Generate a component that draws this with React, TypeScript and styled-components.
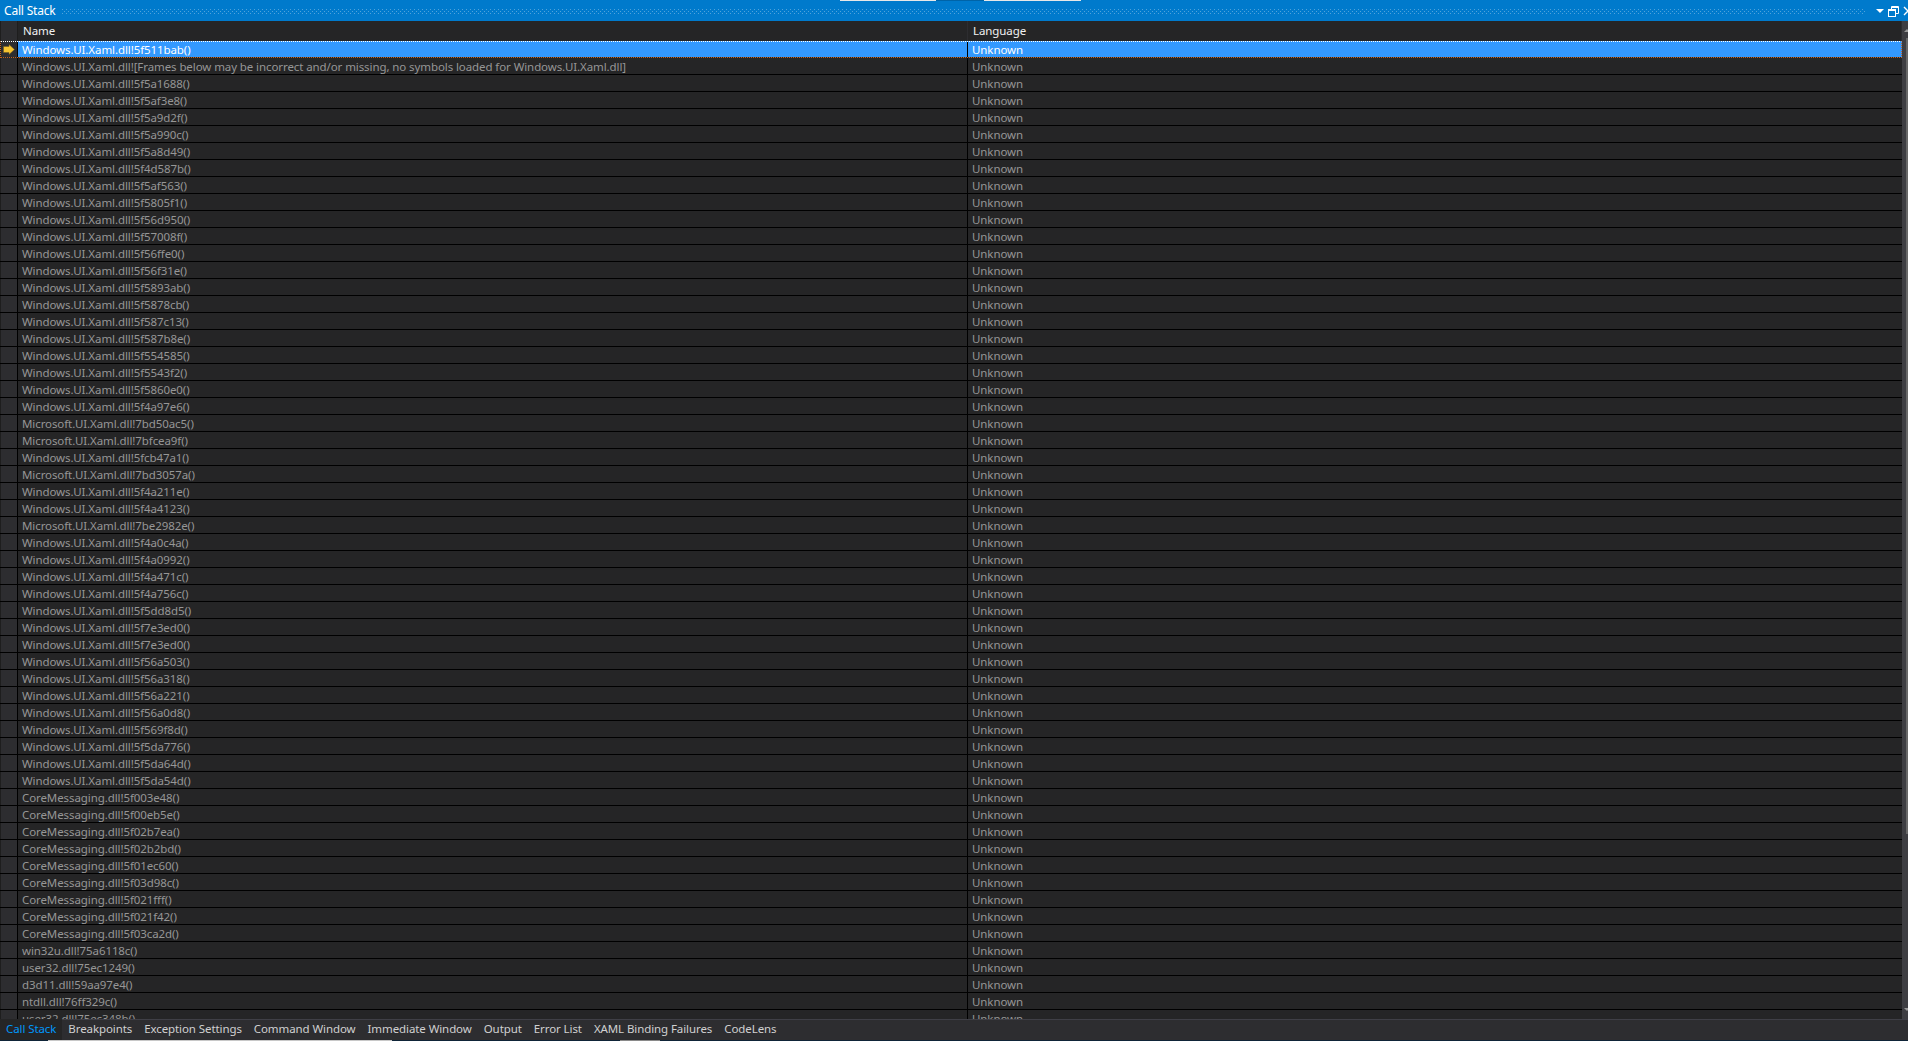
import styled, { createGlobalStyle } from "styled-components";

const GlobalStyle = createGlobalStyle`
  html, body {
    margin: 0;
    padding: 0;
    background: #2d2d30;
  }
  #root {
    height: 1041px;
  }
`;

const FONT = `"Noto Sans", "Open Sans", sans-serif`;

const Window = styled.div`
  display: flex;
  flex-direction: column;
  width: 1908px;
  height: 1041px;
  overflow: hidden;
  font-family: ${FONT};
  font-size: 11.5px;
  letter-spacing: -0.09px;
`;

const CaptureStrip = styled.div`
  display: flex;
  height: 1px;
  flex: none;
`;

const StripPiece = styled.div<{ $w: number; $color: string }>`
  width: ${(p) => p.$w}px;
  flex: ${(p) => (p.$w ? "none" : 1)};
  background: ${(p) => p.$color};
`;

const TitleBar = styled.div`
  display: flex;
  align-items: center;
  height: 20px;
  flex: none;
  background: #007acc;
  color: #fff;
  padding-left: 4px;
`;

const TitleText = styled.span`
  line-height: 20px;
  font-size: 12px;
  letter-spacing: -0.2px;
`;

const Grip = styled.div`
  flex: 1;
  height: 5px;
  margin: 1px 11px 0 7px;
  background-image: conic-gradient(from 270deg at 1px 1px, #4fa3dc 90deg, transparent 0),
    conic-gradient(from 270deg at 1px 1px, #4fa3dc 90deg, transparent 0);
  background-size: 4px 4px;
  background-position: 0 0, 2px 2px;
`;

const TitleButtons = styled.div`
  display: flex;
  align-items: center;
  gap: 4px;
  width: 32px;
  flex: none;
  & > svg {
    flex: none;
  }
`;

const Body = styled.div`
  display: flex;
  flex: 1;
  min-height: 0;
`;

const Grid = styled.div`
  flex: 1;
  min-width: 0;
  display: flex;
  flex-direction: column;
  overflow: hidden;
  background: #252526;
`;

const HeaderRow = styled.div`
  display: grid;
  grid-template-columns: 18px 950px 1fr;
  height: 20px;
  flex: none;
  color: #f1f1f1;
`;

const HeaderGutter = styled.div`
  background: #2d2d30;
  border-left: 1px solid #1e1e1e;
  border-right: 1px solid #1e1e1e;
`;

const HeaderCell = styled.div`
  line-height: 20px;
  padding-left: 5px;
  border-right: 1px solid #2d2d30;
`;

const Row = styled.div<{ $selected?: boolean }>`
  display: grid;
  grid-template-columns: 18px 950px 1fr;
  height: 17px;
  flex: none;
  box-sizing: border-box;
  border-bottom: 1px solid ${(p) => (p.$selected ? "#252526" : "#000")};
  color: ${(p) => (p.$selected ? "#fff" : "#969696")};
  background: ${(p) => (p.$selected ? "#3399ff" : "#252526")};
  position: relative;
`;

const SelectionOutline = styled.div`
  position: absolute;
  inset: 0 0 -1px 0;
  border: 1px dotted #c8641e;
  border-top-color: #fff;
  pointer-events: none;
`;

const Gutter = styled.div`
  display: flex;
  align-items: center;
  justify-content: center;
  background: #2d2d30;
  border-left: 1px solid #1e1e1e;
  border-right: 1px solid #000;
`;

const NameCell = styled.div`
  line-height: 16px;
  padding: 1px 0 0 4px;
  white-space: nowrap;
  overflow: hidden;
  border-right: 1px solid #000;
`;

const LanguageCell = styled.div`
  line-height: 16px;
  padding: 1px 0 0 4px;
  white-space: nowrap;
  overflow: hidden;
`;

const ScrollBar = styled.div`
  width: 6px;
  flex: none;
  display: flex;
  flex-direction: column;
  align-items: flex-end;
  background: #3e3e42;
`;

const ScrollArrow = styled.div<{ $down?: boolean }>`
  width: 0;
  height: 0;
  margin-top: ${(p) => (p.$down ? "174px" : "8px")};
  margin-right: -2px;
  border-left: 3px solid transparent;
  border-right: 3px solid transparent;
  ${(p) =>
    p.$down
      ? "border-top: 3px solid #999;"
      : "border-bottom: 3px solid #999;"}
`;

const ScrollThumb = styled.div`
  width: 2px;
  height: 796px;
  margin-top: 6px;
  background: #686868;
`;

const TabBar = styled.div`
  display: flex;
  height: 21px;
  flex: none;
  box-sizing: border-box;
  background: #2d2d30;
  border-top: 1px solid #3f3f46;
`;

const Tab = styled.div<{ $active?: boolean }>`
  padding: 0 6px;
  line-height: 17px;
  white-space: nowrap;
  color: ${(p) => (p.$active ? "#0097fb" : "#d0d0d0")};
  background: ${(p) => (p.$active ? "#252526" : "transparent")};
  margin-top: ${(p) => (p.$active ? "-1px" : "0")};
  padding-top: ${(p) => (p.$active ? "1px" : "0")};
`;

const win = (a: string) => `Windows.UI.Xaml.dll!${a}()`;
const ms = (a: string) => `Microsoft.UI.Xaml.dll!${a}()`;
const core = (a: string) => `CoreMessaging.dll!${a}()`;

const frames = [
  win("5f511bab"),
  "Windows.UI.Xaml.dll![Frames below may be incorrect and/or missing, no symbols loaded for Windows.UI.Xaml.dll]",
  ...["5f5a1688", "5f5af3e8", "5f5a9d2f", "5f5a990c", "5f5a8d49", "5f4d587b", "5f5af563", "5f5805f1", "5f56d950", "5f57008f", "5f56ffe0", "5f56f31e", "5f5893ab", "5f5878cb", "5f587c13", "5f587b8e", "5f554585", "5f5543f2", "5f5860e0", "5f4a97e6"].map(win),
  ms("7bd50ac5"),
  ms("7bfcea9f"),
  win("5fcb47a1"),
  ms("7bd3057a"),
  win("5f4a211e"),
  win("5f4a4123"),
  ms("7be2982e"),
  ...["5f4a0c4a", "5f4a0992", "5f4a471c", "5f4a756c", "5f5dd8d5", "5f7e3ed0", "5f7e3ed0", "5f56a503", "5f56a318", "5f56a221", "5f56a0d8", "5f569f8d", "5f5da776", "5f5da64d", "5f5da54d"].map(win),
  ...["5f003e48", "5f00eb5e", "5f02b7ea", "5f02b2bd", "5f01ec60", "5f03d98c", "5f021fff", "5f021f42", "5f03ca2d"].map(core),
  "win32u.dll!75a6118c()",
  "user32.dll!75ec1249()",
  "d3d11.dll!59aa97e4()",
  "ntdll.dll!76ff329c()",
  "user32.dll!75ec348b()",
];

const tabs = ["Call Stack", "Breakpoints", "Exception Settings", "Command Window", "Immediate Window", "Output", "Error List", "XAML Binding Failures", "CodeLens"];

const CurrentArrow = () => (
  <svg width="12" height="11" viewBox="0 0 12 11">
    <path d="M0.5 2.5H6V0.5L11.5 5.5L6 10.5V8.5H0.5Z" fill="#f6c330" stroke="#6a5620" strokeWidth="0.5" />
  </svg>
);

const App = () => {
  return (
    <Window>
      <GlobalStyle />
      <CaptureStrip>
        <StripPiece $w={840} $color="#007acc" />
        <StripPiece $w={96} $color="#e8e8e8" />
        <StripPiece $w={48} $color="#0064a8" />
        <StripPiece $w={97} $color="#e8e8e8" />
        <StripPiece $w={0} $color="#007acc" />
      </CaptureStrip>
      <TitleBar>
        <TitleText>Call Stack</TitleText>
        <Grip />
        <TitleButtons>
          <svg width="8" height="4" viewBox="0 0 8 4">
            <path d="M0 0H8L4 4Z" fill="#fff" />
          </svg>
          <svg width="11" height="11" viewBox="0 0 11 11" fill="none" stroke="#fff">
            <path d="M3.5 3V0.5H10.5V7.5H8" />
            <rect x="0.5" y="3.5" width="7" height="7" strokeWidth="1" />
            <path d="M0.5 4.5H7.5M3.5 1.5H10.5" />
          </svg>
          <svg width="10" height="10" viewBox="0 0 10 10" stroke="#fff" strokeWidth="1.4">
            <path d="M1 1L9 9M9 1L1 9" />
          </svg>
        </TitleButtons>
      </TitleBar>
      <Body>
        <Grid>
          <HeaderRow>
            <HeaderGutter />
            <HeaderCell>Name</HeaderCell>
            <HeaderCell>Language</HeaderCell>
          </HeaderRow>
          {frames.map((name, i) => (
            <Row key={i} $selected={i === 0}>
              <Gutter>{i === 0 && <CurrentArrow />}</Gutter>
              <NameCell>{name}</NameCell>
              <LanguageCell>Unknown</LanguageCell>
              {i === 0 && <SelectionOutline />}
            </Row>
          ))}
        </Grid>
        <ScrollBar>
          <ScrollArrow />
          <ScrollThumb />
          <ScrollArrow $down />
        </ScrollBar>
      </Body>
      <TabBar>
        {tabs.map((t, i) => (
          <Tab key={t} $active={i === 0}>
            {t}
          </Tab>
        ))}
      </TabBar>
      <CaptureStrip>
        <StripPiece $w={48} $color="#0f2438" />
        <StripPiece $w={344} $color="#c8c8c8" />
        <StripPiece $w={228} $color="#0f2438" />
        <StripPiece $w={40} $color="#8a8a8a" />
        <StripPiece $w={0} $color="#0f2438" />
      </CaptureStrip>
    </Window>
  );
};

export default App;
